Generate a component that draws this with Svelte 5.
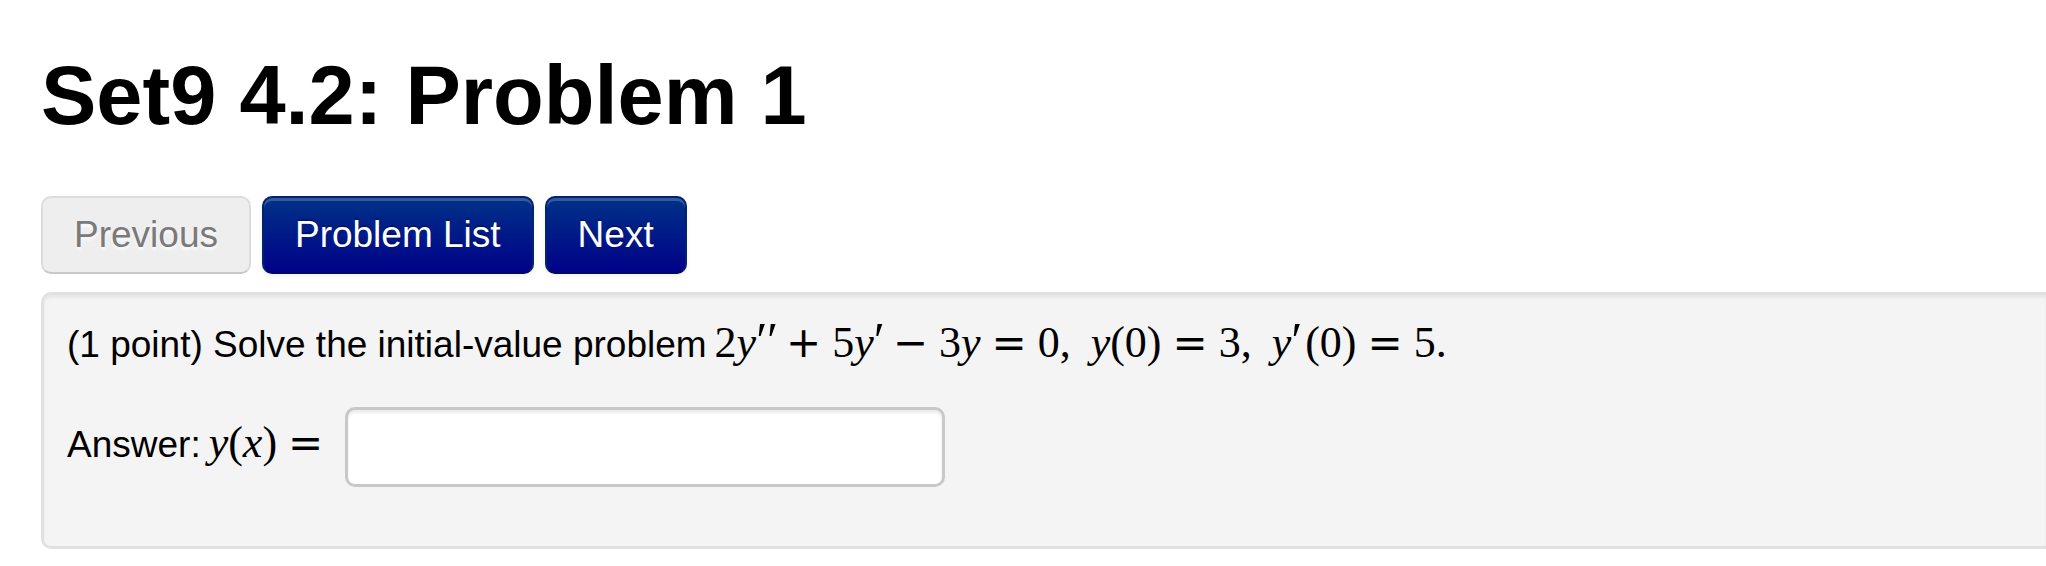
<script lang="ts">
  type Token = { kind: 'num' | 'var' | 'prime' | 'op' | 'punct' | 'paren'; text: string };

  const num = (text: string): Token => ({ kind: 'num', text });
  const variable = (text: string): Token => ({ kind: 'var', text });
  const prime = (text: string): Token => ({ kind: 'prime', text });
  const op = (text: string): Token => ({ kind: 'op', text });
  const punct = (text: string): Token => ({ kind: 'punct', text });
  const paren = (text: string): Token => ({ kind: 'paren', text });

  const equation: Token[] = [
    num('2'), variable('y'), prime('′′'), op('+'),
    num('5'), variable('y'), prime('′'), op('−'),
    num('3'), variable('y'), op('='), num('0'), punct(','),
    variable('y'), paren('('), num('0'), paren(')'), op('='), num('3'), punct(','),
    variable('y'), prime('′'), paren('('), num('0'), paren(')'), op('='), num('5'), num('.')
  ];

  const answerLabel: Token[] = [
    variable('y'), paren('('), variable('x'), paren(')'), op('=')
  ];

  let answer = $state('');
</script>

{#snippet math(tokens: Token[])}
  <span class="math">
    {#each tokens as token}
      <span class={token.kind}>{token.text}</span>
    {/each}
  </span>
{/snippet}

<main>
  <h1>Set9 4.2: Problem 1</h1>

  <nav>
    <button class="btn" type="button" disabled>Previous</button>
    <button class="btn primary" type="button">Problem List</button>
    <button class="btn primary" type="button">Next</button>
  </nav>

  <form class="problem">
    <p class="line">
      <span>(1 point) Solve the initial-value problem</span>
      {@render math(equation)}
    </p>
    <div class="answer">
      <label class="line" for="answer">
        <span>Answer:</span>
        {@render math(answerLabel)}
      </label>
      <input id="answer" type="text" autocomplete="off" bind:value={answer} />
    </div>
  </form>
</main>

<style>
  :global(body) {
    margin: 0;
    background: #fff;
  }

  main {
    padding: 44px 0 16px 41px;
    font-family: "Liberation Sans", Arial, sans-serif;
    font-size: 37px;
    line-height: 52px;
    color: #000;
  }

  h1 {
    margin: 0 0 48px;
    font-size: 83px;
    font-weight: bold;
    line-height: 104px;
  }

  nav {
    display: flex;
    gap: 11px;
    margin-bottom: 18px;
  }

  .btn {
    box-sizing: border-box;
    height: 78px;
    padding: 0 31px;
    border: 2px solid #dcdcdc;
    border-bottom-color: #c8c8c8;
    border-radius: 10px;
    background: #eee;
    color: #7a7a7a;
    font-family: inherit;
    font-size: 37px;
    line-height: 52px;
    text-shadow: 0 3px 3px rgba(255, 255, 255, 0.75);
  }

  .btn.primary {
    border-color: #02236f #02236f #010a5c;
    background: linear-gradient(to bottom, #038, #008) border-box;
    color: #fff;
    text-shadow: 0 -2px 0 rgba(0, 0, 0, 0.25);
    box-shadow:
      inset 0 3px 0 rgba(255, 255, 255, 0.2),
      0 3px 5px rgba(0, 0, 0, 0.05);
  }

  .problem {
    display: flex;
    flex-direction: column;
    gap: 36px;
    padding: 22px 23px 59px;
    border: 3px solid #e1e1e1;
    border-right: 0;
    border-radius: 10px 0 0 10px;
    background: #f4f4f4;
    box-shadow: inset 0 3px 3px rgba(0, 0, 0, 0.05);
  }

  .line,
  .answer {
    display: flex;
    align-items: baseline;
    gap: 8px;
    margin: 0;
    white-space: nowrap;
  }

  .answer {
    gap: 11px;
  }

  .math {
    display: flex;
    align-items: baseline;
    font-family: "Liberation Serif", "Times New Roman", serif;
    font-size: 44px;
  }

  .var,
  .prime {
    font-style: italic;
  }

  /* primes tuck in close to the letter before them */
  .prime {
    margin-left: -3px;
    font-size: 50px;
    line-height: 44px;
  }

  .prime + .paren {
    margin-left: 6px;
  }

  .op {
    margin: 0 11px;
    font-family: "DejaVu Sans", sans-serif;
    font-size: 42px;
    line-height: 44px;
  }

  .punct {
    margin-right: 20px;
  }

  input {
    box-sizing: border-box;
    width: 600px;
    height: 80px;
    padding: 0 16px 4px;
    border: 3px solid #c8c8c8;
    border-radius: 10px;
    background: #fff;
    font-family: inherit;
    font-size: 37px;
    box-shadow: inset 0 3px 3px rgba(0, 0, 0, 0.075);
  }
</style>
